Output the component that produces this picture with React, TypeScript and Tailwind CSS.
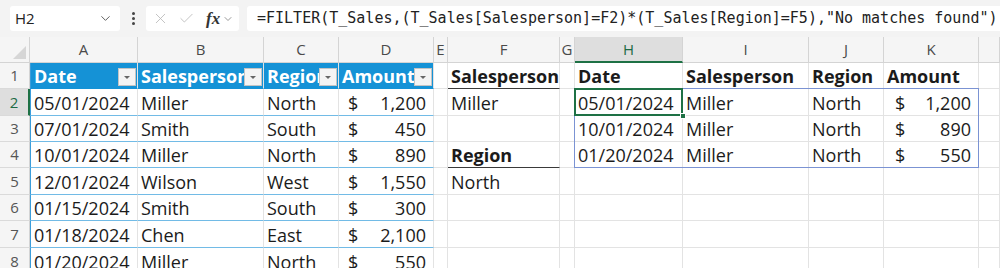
import { ChevronDown, X, Check } from 'lucide-react';
import clsx from 'clsx';
import { Fragment } from 'react';

type Cell = string | { amt: string } | null;

const letters = ['A', 'B', 'C', 'D', 'E', 'F', 'G', 'H', 'I', 'J', 'K', ''];

const rows: Cell[][] = [
  ['Date', 'Salesperson', 'Region', 'Amount', null, 'Salesperson', null, 'Date', 'Salesperson', 'Region', 'Amount', null],
  ['05/01/2024', 'Miller', 'North', { amt: '1,200' }, null, 'Miller', null, '05/01/2024', 'Miller', 'North', { amt: '1,200' }, null],
  ['07/01/2024', 'Smith', 'South', { amt: '450' }, null, null, null, '10/01/2024', 'Miller', 'North', { amt: '890' }, null],
  ['10/01/2024', 'Miller', 'North', { amt: '890' }, null, 'Region', null, '01/20/2024', 'Miller', 'North', { amt: '550' }, null],
  ['12/01/2024', 'Wilson', 'West', { amt: '1,550' }, null, 'North', null, null, null, null, null, null],
  ['01/15/2024', 'Smith', 'South', { amt: '300' }, null, null, null, null, null, null, null, null],
  ['01/18/2024', 'Chen', 'East', { amt: '2,100' }, null, null, null, null, null, null, null, null],
  ['01/20/2024', 'Miller', 'North', { amt: '550' }, null, null, null, null, null, null, null, null],
];

const rowHeights = ['h-[26px]', 'h-[27px]', 'h-[26px]', 'h-[26px]', 'h-[27px]', 'h-[26px]', 'h-[27px]', 'h-[27px]'];

function Dropdown() {
  return (
    <span className="absolute right-[1px] top-[5px] w-[18px] h-[18px] bg-[#f4f4f4] border border-[#c4c4c4] flex items-center justify-center">
      <svg width="8" height="5" viewBox="0 0 8 5">
        <path d="M1 1 L4 4 L7 1 Z" fill="#666" />
      </svg>
    </span>
  );
}

function DataCell({ r, c, v }: { r: number; c: number; v: Cell }) {
  const inTable = c <= 3;
  const header = r === 0;
  const bold = (r === 0 && c >= 5 && c !== 6) || (r === 3 && c === 5);
  const underline = c === 5 && (r === 0 || r === 3);
  const selected = r === 1 && c === 7;

  return (
    <div
      className={clsx(
        'relative flex items-center whitespace-nowrap pt-[2px] border-r border-b border-r-[#e3e3e3]',
        inTable && header && 'bg-[#1592d6] text-white font-bold border-b-[#1592d6] border-r-[#1592d6]',
        inTable && !header && 'border-b-[#72bbe6]',
        !inTable && !underline && 'border-b-[#e3e3e3]',
        underline && 'border-b-[#3a3a3a]',
        c === 0 && 'border-l border-l-[#3a9ddb]',
        c === 3 && 'border-r-[#3a9ddb]',
        bold && 'font-bold',
        selected && 'z-10',
        rowHeights[r]
      )}
    >
      {v && typeof v === 'object' ? (
        <div className={clsx('flex w-full justify-between pr-[7px]', c === 3 ? 'pl-[9px]' : 'pl-[11px]')}>
          <span>$</span>
          <span>{v.amt}</span>
        </div>
      ) : (
        <span className="overflow-hidden w-full pl-[3px]">{v}</span>
      )}
      {inTable && header && <Dropdown />}
      {selected && (
        <>
          <div className="absolute left-[-1px] top-[-1px] w-[405px] h-[80px] border border-[#7b93d3] pointer-events-none" />
          <div className="absolute left-[-1px] top-[-1px] right-[-1px] bottom-[-1px] border-2 border-[#1e7145] pointer-events-none" />
          <div className="absolute right-[-4px] bottom-[-4px] w-[6px] h-[6px] bg-[#1e7145] border border-white" />
        </>
      )}
    </div>
  );
}

export default function App() {
  return (
    <div className="w-[1000px] h-[268px] overflow-hidden bg-white text-[#1b1b1b] font-['Open_Sans',sans-serif]">
      {/* formula bar */}
      <div className="h-[37px] bg-[#f3f3f3] flex items-center gap-[8px] pl-[10px]">
        <div className="w-[110px] h-[25px] bg-white rounded-[3px] flex items-center justify-between pl-[5px] pr-[7px] text-[15px] text-[#222]">
          <span>H2</span>
          <ChevronDown size={15} strokeWidth={1.5} className="text-[#555]" />
        </div>
        <div className="flex flex-col gap-[2px] w-[10px] items-center">
          <span className="w-[3px] h-[3px] rounded-full bg-[#444]" />
          <span className="w-[3px] h-[3px] rounded-full bg-[#444]" />
          <span className="w-[3px] h-[3px] rounded-full bg-[#444]" />
        </div>
        <div className="w-[93px] h-[25px] bg-white rounded-[3px] flex items-center gap-[9px] pl-[6px]">
          <X size={17} strokeWidth={1.2} className="text-[#b9b9b9]" />
          <Check size={17} strokeWidth={1.2} className="text-[#b9b9b9]" />
          <span className="font-['Liberation_Serif',serif] italic font-bold text-[17px] text-[#333] leading-none ml-[2px]">fx</span>
          <ChevronDown size={12} strokeWidth={1.5} className="text-[#777] -ml-[7px]" />
        </div>
        <div className="flex-1 h-[25px] bg-white rounded-l-[3px] flex items-center pl-[10px] font-['DejaVu_Sans_Mono',monospace] text-[15px] text-[#222] whitespace-nowrap overflow-hidden">
          =FILTER(T_Sales,(T_Sales[Salesperson]=F2)*(T_Sales[Region]=F5),"No matches found")
        </div>
      </div>

      <div className="grid grid-cols-[30px_108px_126px_75px_95px_14px_112px_15px_108px_126px_75px_95px_1fr] text-[18px]">
        {/* column header row */}
        <div className="h-[26px] bg-[#f5f5f5] border-r border-b border-[#d4d4d4] flex items-end justify-end p-[3px]">
          <svg width="13" height="13" viewBox="0 0 13 13">
            <path d="M13 0 L13 13 L0 13 Z" fill="#d6d6d6" />
          </svg>
        </div>
        {letters.map((l, i) => (
          <div
            key={l + i}
            className={clsx(
              'h-[26px] flex items-center justify-center text-[15px] border-r',
              i === 7
                ? 'bg-[#dedede] text-[#1d6b45] border-b-2 border-b-[#1e7145] border-r-[#d4d4d4]'
                : 'bg-[#f5f5f5] text-[#4a4a4a] border-b border-[#d4d4d4]'
            )}
          >
            {l}
          </div>
        ))}

        {rows.map((row, r) => (
          <Fragment key={'r' + r}>
            <div
              className={clsx(
                'flex items-center justify-center text-[15px] border-b border-[#dadada]',
                rowHeights[r],
                r === 1
                  ? 'bg-[#dedede] text-[#1d6b45] border-r-2 border-r-[#1e7145]'
                  : 'bg-[#f5f5f5] text-[#555] border-r border-r-[#d4d4d4]'
              )}
            >
              {r + 1}
            </div>
            {row.map((v, c) => (
              <DataCell key={r + '-' + c} r={r} c={c} v={v} />
            ))}
          </Fragment>
        ))}
      </div>
    </div>
  );
}
